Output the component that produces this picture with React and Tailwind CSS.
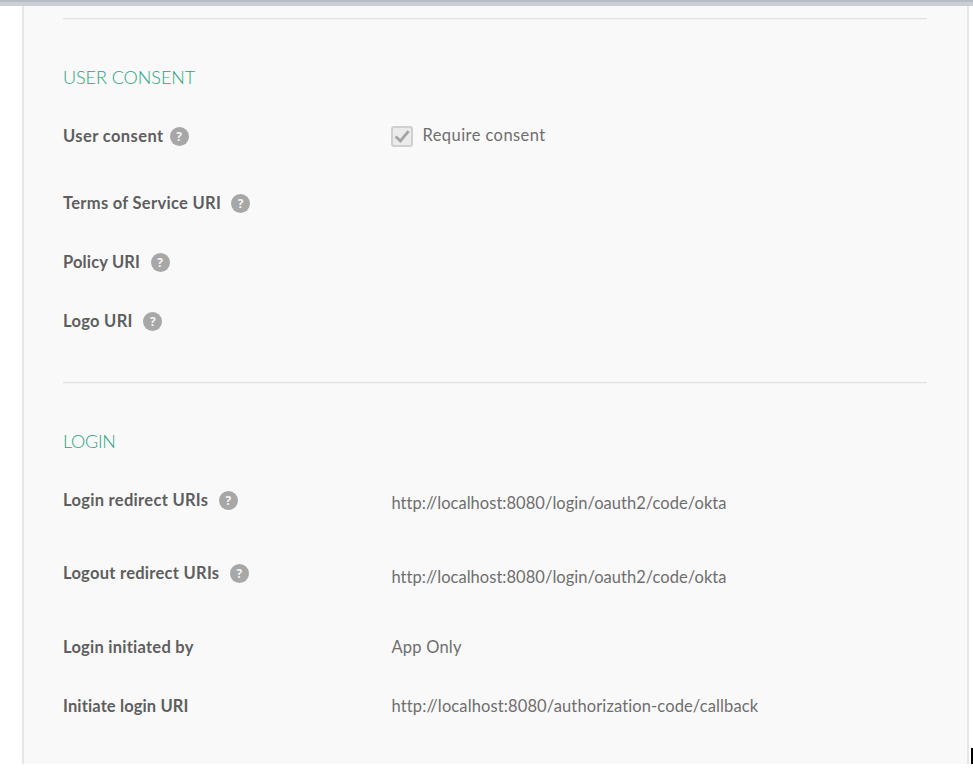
import React from 'react';

/* ── Settings rows ── */
const CONSENT_ROWS = [
  { label: 'User consent', labelClass: 'tracking-[0.4px]', hint: 'ml-1.5', height: 'h-[67px]', checkbox: 'Require consent' },
  { label: 'Terms of Service URI', labelClass: 'tracking-[0.3px]', hint: 'ml-[10px]', height: 'h-[59px]' },
  { label: 'Policy URI', labelClass: 'tracking-[0.15px]', hint: 'ml-[10.5px]', height: 'h-[59px]' },
  { label: 'Logo URI', labelClass: 'tracking-[0.3px]', hint: 'ml-[10.5px]', height: 'h-[71px]' },
];

const LOGIN_ROWS = [
  { label: 'Login redirect URIs', labelClass: 'tracking-[0.3px]', hint: 'ml-[10.5px]', height: 'h-[73px]', value: 'http://localhost:8080/login/oauth2/code/okta', valueClass: 'pt-[3px] tracking-[0.03px]' },
  { label: 'Logout redirect URIs', labelClass: 'tracking-[0.27px]', hint: 'ml-[10.5px]', height: 'h-[74px]', value: 'http://localhost:8080/login/oauth2/code/okta', valueClass: 'pt-1 tracking-[0.03px]' },
  { label: 'Login initiated by', labelClass: 'tracking-[0.25px]', height: 'h-[59px]', value: 'App Only', valueClass: 'tracking-[0.2px]' },
  { label: 'Initiate login URI', labelClass: 'tracking-[0.13px]', height: 'h-5', value: 'http://localhost:8080/authorization-code/callback', valueClass: 'tracking-[0.12px]' },
];

function HelpIcon({ className }) {
  return (
    <span className={`mt-[1.25px] flex h-[19px] w-[19px] shrink-0 items-center justify-center rounded-full bg-[#a7a7a7] font-['Open_Sans',sans-serif] text-[12px] leading-none font-bold text-[#f4f4f4] ${className}`}>
      ?
    </span>
  );
}

function Checkbox({ label }) {
  return (
    <div className="flex">
      <span className="-ml-px h-[21px] w-[22px] shrink-0 rounded-[3px] border-2 border-[#cfcfcf] bg-[#ebebeb]">
        <svg className="h-[17px] w-[18px]" viewBox="0 0 18 17" fill="none">
          <path d="M2.6 8.4 7.4 13 15.6 3.2" stroke="#a3a3a3" strokeWidth="2.8" />
        </svg>
      </span>
      <span className="-mt-px ml-[10px] tracking-[0.43px]">{label}</span>
    </div>
  );
}

function Section({ title, titleClass, rows }) {
  return (
    <section className="border-t border-[#e2e2e2] pt-12 shadow-[inset_0_1px_0_#f2f2f2]">
      <h2 className={`mb-[39px] text-[18px] leading-5 font-light text-[#27a480] ${titleClass}`}>{title}</h2>
      {rows.map((row) => (
        <div key={row.label} className={`flex ${row.height}`}>
          <div className="flex w-[328.5px] shrink-0 items-start">
            <span className={`font-bold text-[#5e5e5e] ${row.labelClass}`}>{row.label}</span>
            {row.hint && <HelpIcon className={row.hint} />}
          </div>
          {row.checkbox && <Checkbox label={row.checkbox} />}
          {row.value && <div className={row.valueClass}>{row.value}</div>}
        </div>
      ))}
    </section>
  );
}

export default function App() {
  return (
    <div className="flex h-[773px] w-[973px] flex-col overflow-hidden bg-white font-['Lato',sans-serif] text-[16.5px] leading-5 whitespace-nowrap text-[#6e6e6e]">
      {/* Bottom edge of the toolbar */}
      <div className="h-1.5 shrink-0 border-t-2 border-[#b7bcc2] bg-[#cbced3]" />

      <div className="flex h-[758px] shrink-0">
        <main className="ml-[22px] w-[947px] border-x-2 border-[#e6e6e6] bg-[#f9f9f9] pt-3 pr-10 pl-[39px]">
          <Section title="USER CONSENT" titleClass="tracking-[-0.05px]" rows={CONSENT_ROWS} />
          <Section title="LOGIN" titleClass="tracking-[-0.3px]" rows={LOGIN_ROWS} />
        </main>
        <div className="ml-auto h-4 w-0.5 self-end bg-black" />
      </div>
    </div>
  );
}
